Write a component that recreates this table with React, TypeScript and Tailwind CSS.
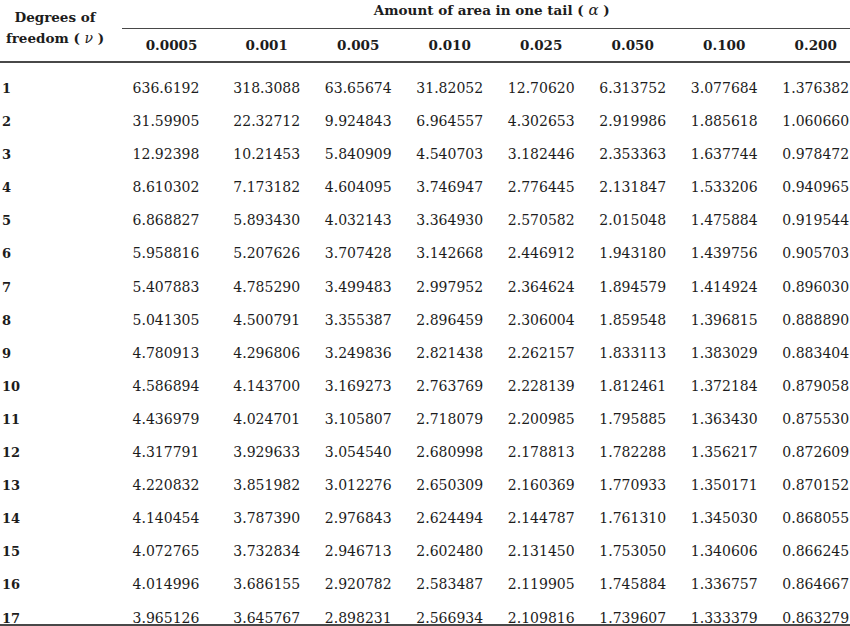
import React from "react";

const heads = ["0.0005", "0.001", "0.005", "0.010", "0.025", "0.050", "0.100", "0.200"];

const rows: string[][] = [
  ["636.6192", "318.3088", "63.65674", "31.82052", "12.70620", "6.313752", "3.077684", "1.376382"],
  ["31.59905", "22.32712", "9.924843", "6.964557", "4.302653", "2.919986", "1.885618", "1.060660"],
  ["12.92398", "10.21453", "5.840909", "4.540703", "3.182446", "2.353363", "1.637744", "0.978472"],
  ["8.610302", "7.173182", "4.604095", "3.746947", "2.776445", "2.131847", "1.533206", "0.940965"],
  ["6.868827", "5.893430", "4.032143", "3.364930", "2.570582", "2.015048", "1.475884", "0.919544"],
  ["5.958816", "5.207626", "3.707428", "3.142668", "2.446912", "1.943180", "1.439756", "0.905703"],
  ["5.407883", "4.785290", "3.499483", "2.997952", "2.364624", "1.894579", "1.414924", "0.896030"],
  ["5.041305", "4.500791", "3.355387", "2.896459", "2.306004", "1.859548", "1.396815", "0.888890"],
  ["4.780913", "4.296806", "3.249836", "2.821438", "2.262157", "1.833113", "1.383029", "0.883404"],
  ["4.586894", "4.143700", "3.169273", "2.763769", "2.228139", "1.812461", "1.372184", "0.879058"],
  ["4.436979", "4.024701", "3.105807", "2.718079", "2.200985", "1.795885", "1.363430", "0.875530"],
  ["4.317791", "3.929633", "3.054540", "2.680998", "2.178813", "1.782288", "1.356217", "0.872609"],
  ["4.220832", "3.851982", "3.012276", "2.650309", "2.160369", "1.770933", "1.350171", "0.870152"],
  ["4.140454", "3.787390", "2.976843", "2.624494", "2.144787", "1.761310", "1.345030", "0.868055"],
  ["4.072765", "3.732834", "2.946713", "2.602480", "2.131450", "1.753050", "1.340606", "0.866245"],
  ["4.014996", "3.686155", "2.920782", "2.583487", "2.119905", "1.745884", "1.336757", "0.864667"],
  ["3.965126", "3.645767", "2.898231", "2.566934", "2.109816", "1.739607", "1.333379", "0.863279"],
];

export default function App() {
  return (
    <div className="w-[850px] h-[626px] overflow-hidden bg-white text-[#1c1c1c] font-['DejaVu_Serif',serif]">
      <div className="flex h-[63px] border-b-2 border-[#484848]">
        <div className="w-[122px] shrink-0">
          <div className="w-[110px] pt-[7px] text-center text-[13.5px] font-bold leading-[20.5px]">
            <div>Degrees of</div>
            <div>
              freedom ( <span className="font-normal italic text-[14px]">ν</span> )
            </div>
          </div>
        </div>
        <div className="flex w-[739.5px] shrink-0 flex-col">
          <div className="h-[28.5px] border-b-[1.5px] border-[#484848] text-center text-[13.5px] font-bold leading-[20px]">
            Amount of area in one tail ( <span className="font-normal italic text-[15px]">α</span> )
          </div>
          <div className="flex flex-1 items-center text-[13.5px] font-bold">
            {heads.map((h, i) => (
              <div key={h} className={(i === 0 ? "w-[99px]" : "w-[91.5px]") + " shrink-0 text-center"}>
                {h}
              </div>
            ))}
          </div>
        </div>
      </div>
      <div className="h-[563px] overflow-hidden border-b-2 border-[#484848] pt-[9px]">
        {rows.map((r, ri) => (
          <div key={ri} className="flex h-[33.1px] leading-[33.1px]">
            <div className="w-[122px] shrink-0 pl-[2px] text-[13px] font-bold">{ri + 1}</div>
            {r.map((v, ci) => (
              <div
                key={ci}
                className={
                  (ci === 0 ? "w-[99px] pr-[11px]" : "w-[91.5px]") + " shrink-0 text-center text-[14px]"
                }
              >
                {v}
              </div>
            ))}
          </div>
        ))}
      </div>
    </div>
  );
}
